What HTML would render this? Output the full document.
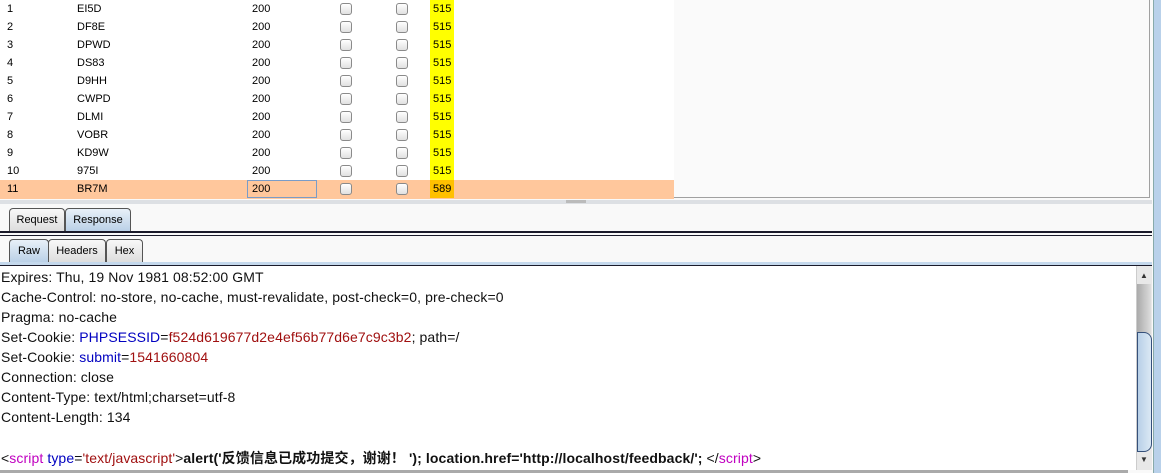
<!DOCTYPE html>
<html><head><meta charset="utf-8"><style>
*{margin:0;padding:0;box-sizing:border-box}
body{width:1161px;height:473px;overflow:hidden;background:#f9f9f9;position:relative;font-family:"Liberation Sans","Noto Sans CJK SC",sans-serif}
.a{position:absolute}
.tbl{left:0;top:0;width:1150px;height:198px;background:#fafafa;border-right:1px solid #a0a0a0;border-bottom:1px solid #a0a0a0}
.row{position:absolute;left:0;width:674px;height:18px;background:#fff;font-size:11px;color:#000}
.row span{position:absolute;top:3px}
.cb{position:absolute;top:3px;width:12px;height:12px;border:1px solid #8a8a8a;border-radius:3px;background:linear-gradient(#fff,#e0e0e0)}
.len{position:absolute;left:430px;width:24px;height:18px;background:#ffff00}
.tab{position:absolute;height:24px;border:1px solid #555;border-bottom:none;border-radius:4px 4px 0 0;background:linear-gradient(#f8f8f8,#dcdcdc);font-size:11px;text-align:center;line-height:22px}
.sel{background:linear-gradient(#e8f0f8,#b8cfe6)}
.txt{left:0;top:266px;width:1136px;height:204px;background:#fff;font-size:14px;letter-spacing:0.1px;color:#111}
.txt div{position:absolute;left:1px;white-space:nowrap}
.b{color:#0000c0}.r{color:#a01010}.m{color:#c000c0}
</style></head><body>
<div class="a tbl"></div>
<div id="rows"></div>
<script>
var d=[["1","EI5D"],["2","DF8E"],["3","DPWD"],["4","DS83"],["5","D9HH"],["6","CWPD"],["7","DLMI"],["8","VOBR"],["9","KD9W"],["10","975I"],["11","BR7M"]];
var h="";
d.forEach(function(r,i){var last=i==10;
h+='<div class="row" style="top:'+(i*18)+'px;'+(last?'background:#ffc79c;height:19px':'')+'"><div class="len" style="'+(last?'background:#ffc000':'')+'"></div>'
+'<span style="left:7px">'+r[0]+'</span><span style="left:77px">'+r[1]+'</span>'
+(last?'<div style="position:absolute;left:247px;top:0;width:70px;height:18px;border:1px solid #7a9cc8"></div>':'')
+'<span style="left:252px">200</span><div class="cb" style="left:340px"></div><div class="cb" style="left:396px"></div><span style="left:433px">'+(last?'589':'515')+'</span></div>';});
document.getElementById('rows').innerHTML=h;
</script>
<div class="a" style="left:0;top:200px;width:1152px;height:4px;background:#dde0e4"></div>
<div class="a" style="left:566px;top:200px;width:20px;height:3px;background:#bbb"></div>
<div class="tab a" style="left:9px;top:208px;width:56px">Request</div>
<div class="tab sel a" style="left:65px;top:208px;width:66px">Response</div>
<div class="a" style="left:0;top:231px;width:1152px;height:2px;background:#1a1a2a"></div>
<div class="a" style="left:0;top:235px;width:1152px;height:1px;background:#1a1a2a"></div>
<div class="tab sel a" style="left:9px;top:239px;width:40px">Raw</div>
<div class="tab a" style="left:48px;top:239px;width:58px">Headers</div>
<div class="tab a" style="left:106px;top:239px;width:37px">Hex</div>
<div class="a" style="left:0;top:262px;width:1152px;height:3px;background:#c4d8ec"></div>
<div class="a" style="left:0;top:265px;width:1152px;height:1px;background:#1a1a2a"></div>
<div class="a txt">
<div style="top:3px">Expires: Thu, 19 Nov 1981 08:52:00 GMT</div>
<div style="top:23px">Cache-Control: no-store, no-cache, must-revalidate, post-check=0, pre-check=0</div>
<div style="top:43px">Pragma: no-cache</div>
<div style="top:63px">Set-Cookie: <span class="b">PHPSESSID</span>=<span class="r">f524d619677d2e4ef56b77d6e7c9c3b2</span>; path=/</div>
<div style="top:83px">Set-Cookie: <span class="b">submit</span>=<span class="r">1541660804</span></div>
<div style="top:103px">Connection: close</div>
<div style="top:123px">Content-Type: text/html;charset=utf-8</div>
<div style="top:143px">Content-Length: 134</div>
<div style="top:182px">&lt;<span class="m">script</span> <span class="b">type</span>=<span class="r">'text/javascript'</span>&gt;<b>alert('反馈信息已成功提交，谢谢！ '); location.href='http://localhost/feedback/';</b> &lt;/<span class="m">script</span>&gt;</div>
</div>
<div class="a" style="left:1136px;top:266px;width:16px;height:204px;background:#e8e8e8;border-left:1px solid #ccc"></div>
<div class="a" style="left:1140px;top:271px;font-size:8px;color:#333">▲</div>
<div class="a" style="left:1140px;top:455px;font-size:8px;color:#333">▼</div>
<div class="a" style="left:1137px;top:284px;width:14px;height:50px;background:linear-gradient(90deg,#aaa,#ddd)"></div>
<div class="a" style="left:1137px;top:332px;width:15px;height:120px;border:1px solid #35507a;border-radius:0 8px 8px 0;background:linear-gradient(90deg,#b8d0e8,#dbe8f4)"></div>
<div class="a" style="left:0;top:470px;width:1128px;height:3px;background:#aaa"></div>
<div class="a" style="left:1153px;top:0;width:8px;height:473px;background:#b9d1ea;border-left:1px solid #8aa"></div>
</body></html>
